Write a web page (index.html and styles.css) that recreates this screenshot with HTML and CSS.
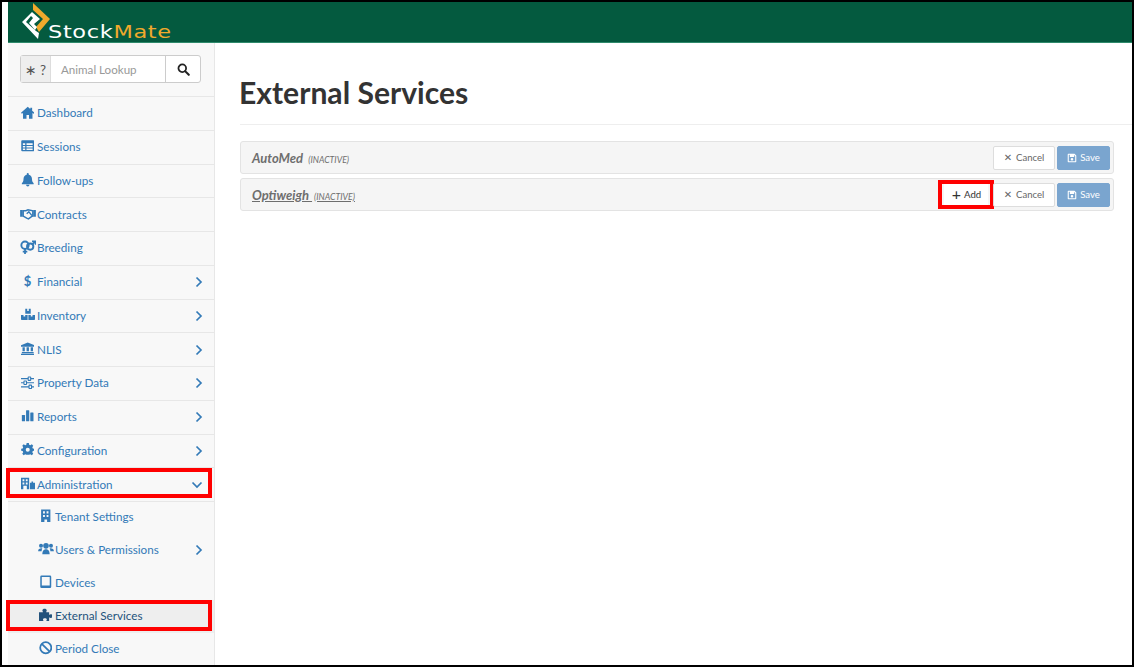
FILE: index.html
```html
<!DOCTYPE html>
<html lang="en">
<head>
<meta charset="utf-8">
<title>External Services</title>
<link rel="stylesheet" href="styles.css">
</head>
<body>
<div class="frame">
  <header class="topbar">
    <div class="logo">
      <svg class="logo-mark" viewBox="0 0 46 42" width="46" height="42">
        <path d="M18 1 L35 17 L24 30 L21 25 L28 17 L18 8 Z" fill="#f0a92c"/>
        <path d="M7 20 L17 10 L25 17 L19 22 L22 25 L20 28 L14 21 L18 16 L16 14 L11 20 L21 29 L24 31 L23 37 Z" fill="#fff"/>
      </svg>
      <span class="logo-text">Stock<span class="logo-accent">Mate</span></span>
    </div>
  </header>
  <div class="layout">
    <aside class="sidebar">
      <div class="lookup">
        <div class="lookup-addon"><span class="star">&#x2217;</span> ?</div>
        <div class="lookup-input">Animal Lookup</div>
        <div class="lookup-btn">
          <svg viewBox="0 0 16 16" width="13" height="13"><circle cx="6.5" cy="6.5" r="4.7" fill="none" stroke="#222" stroke-width="2.2"/><path d="M10 10 L14.5 14.5" stroke="#222" stroke-width="2.6" stroke-linecap="round"/></svg>
        </div>
      </div>
      <nav class="nav">
        <a class="nav-item"><span class="ico"><svg viewBox="0 0 16 16"><path d="M8 1 L0 8 L1 9.3 L2.4 8.2 V15 H6.5 V10.6 H9.5 V15 H13.6 V8.2 L15 9.3 L16 8 L13.2 5.5 V2 H11 V3.6 Z"/></svg></span>Dashboard</a>
        <a class="nav-item"><span class="ico"><svg viewBox="0 0 16 16"><path fill-rule="evenodd" d="M1.5 1.5 H14.5 A1.2 1.2 0 0 1 15.7 2.7 V13.3 A1.2 1.2 0 0 1 14.5 14.5 H1.5 A1.2 1.2 0 0 1 .3 13.3 V2.7 A1.2 1.2 0 0 1 1.5 1.5 Z M2.2 5 V7 H5 V5 Z M6.5 5 V7 H13.8 V5 Z M2.2 8.2 V10.2 H5 V8.2 Z M6.5 8.2 V10.2 H13.8 V8.2 Z M2.2 11.2 V13 H5 V11.2 Z M6.5 11.2 V13 H13.8 V11.2 Z"/></svg></span>Sessions</a>
        <a class="nav-item"><span class="ico"><svg viewBox="0 0 16 16"><path d="M8 0 A1.2 1.2 0 0 1 9.2 1.2 V2 C11.6 2.5 13 4.5 13 6.8 C13 10 14 11 15 12 V13.2 H1 V12 C2 11 3 10 3 6.8 C3 4.5 4.4 2.5 6.8 2 V1.2 A1.2 1.2 0 0 1 8 0 Z M6 14 H10 A2 2 0 0 1 6 14 Z"/></svg></span>Follow-ups</a>
        <a class="nav-item"><span class="ico"><svg viewBox="0 0 18 16" class="wide"><path d="M0 3.5 H3 V11 H0 Z M15 3.5 H18 V11 H15 Z"/><path d="M3.5 4.3 H6.5 L9 3.2 L14.5 4.3 V10.3 L13 11 L9.5 13.6 L7.5 12.8 L3.5 10.3 Z" fill="none" stroke="currentColor" stroke-width="1.7"/><path d="M7.5 7.8 L10 5.5 L13.5 9.8" fill="none" stroke="currentColor" stroke-width="1.6"/></svg></span>Contracts</a>
        <a class="nav-item"><span class="ico"><svg viewBox="0 0 18 16" class="wide"><circle cx="5.6" cy="6" r="4.2" fill="none" stroke="currentColor" stroke-width="2.2"/><circle cx="11.5" cy="7.5" r="3.6" fill="none" stroke="currentColor" stroke-width="2.2"/><path d="M5.6 10 V16 M3 13.3 H8.2 M14 5 L17 2 M13.6 1.5 H17.7 V5.5" fill="none" stroke="currentColor" stroke-width="2"/></svg></span>Breeding</a>
        <a class="nav-item"><span class="ico ico-glyph">$</span>Financial<span class="chev"><svg viewBox="0 0 10 12"><path d="M2.5 1.5 L7 6 L2.5 10.5"/></svg></span></a>
        <a class="nav-item"><span class="ico"><svg viewBox="0 0 18 16" class="mid"><path d="M5.5 .5 H8 V3.5 H10 V.5 H12.5 V7 H5.5 Z M0 8.5 H3.2 V10.5 H5.4 V8.5 H8.5 V15 H1 A1 1 0 0 1 0 14 Z M9.5 8.5 H12.6 V10.5 H14.8 V8.5 H18 V14 A1 1 0 0 1 17 15 H9.5 Z"/></svg></span>Inventory<span class="chev"><svg viewBox="0 0 10 12"><path d="M2.5 1.5 L7 6 L2.5 10.5"/></svg></span></a>
        <a class="nav-item"><span class="ico"><svg viewBox="0 0 16 16"><path d="M8 .5 L16 3.8 V5.5 H0 V3.8 Z M1.8 6.3 H4.5 V11 H1.8 Z M6.6 6.3 H9.4 V11 H6.6 Z M11.5 6.3 H14.2 V11 H11.5 Z M1 11.8 H15 V13.2 H1 Z M0 14 H16 V15.6 H0 Z"/></svg></span>NLIS<span class="chev"><svg viewBox="0 0 10 12"><path d="M2.5 1.5 L7 6 L2.5 10.5"/></svg></span></a>
        <a class="nav-item"><span class="ico"><svg viewBox="0 0 16 16"><path d="M0 3.2 H16 M0 8 H16 M0 12.8 H16" fill="none" stroke="currentColor" stroke-width="1.4"/><rect x="8.5" y="1.2" width="3" height="4" rx=".5" fill="#f8f8f8" stroke="currentColor" stroke-width="1.3"/><rect x="3.5" y="6" width="3" height="4" rx=".5" fill="#f8f8f8" stroke="currentColor" stroke-width="1.3"/><rect x="9.5" y="10.8" width="3" height="4" rx=".5" fill="#f8f8f8" stroke="currentColor" stroke-width="1.3"/></svg></span>Property Data<span class="chev"><svg viewBox="0 0 10 12"><path d="M2.5 1.5 L7 6 L2.5 10.5"/></svg></span></a>
        <a class="nav-item"><span class="ico"><svg viewBox="0 0 16 16"><rect x="1" y="7" width="3.8" height="7.5" rx=".6"/><rect x="6" y="1.5" width="3.8" height="13" rx=".6"/><rect x="11" y="4" width="3.8" height="10.5" rx=".6"/></svg></span>Reports<span class="chev"><svg viewBox="0 0 10 12"><path d="M2.5 1.5 L7 6 L2.5 10.5"/></svg></span></a>
        <a class="nav-item"><span class="ico"><svg viewBox="0 0 16 16"><path fill-rule="evenodd" d="M6.7 1 H9.3 L9.7 3 L11 3.6 L12.8 2.5 L14.5 4.3 L13.4 6 L14 7.4 L15.8 7.8 V10.2 L14 10.6 L13.4 12 L14.5 13.7 L12.8 15.4 L11 14.4 L9.7 15 H6.3 L5 14.4 L3.2 15.4 L1.5 13.7 L2.6 12 L2 10.6 L.2 10.2 V7.8 L2 7.4 L2.6 6 L1.5 4.3 L3.2 2.5 L5 3.6 L6.3 3 Z M8 6.6 A2.4 2.4 0 1 0 8 11.4 A2.4 2.4 0 1 0 8 6.6 Z" transform="translate(0 -1)"/></svg></span>Configuration<span class="chev"><svg viewBox="0 0 10 12"><path d="M2.5 1.5 L7 6 L2.5 10.5"/></svg></span></a>
        <a class="nav-item marked"><span class="ico"><svg viewBox="0 0 18 16" class="mid"><path fill-rule="evenodd" d="M0 .5 H10.5 V15.5 H0 Z M2 2.5 V5 H4.3 V2.5 Z M6.2 2.5 V5 H8.5 V2.5 Z M2 6.8 V9.3 H4.3 V6.8 Z M6.2 6.8 V9.3 H8.5 V6.8 Z M3 11 V15.5 H7.5 V11 Z"/><path d="M11.5 7 H13.5 V5.5 H15.5 V7 H18 V15.5 H11.5 Z"/></svg></span>Administration<span class="chev chev-down"><svg viewBox="0 0 12 10"><path d="M1.5 2.5 L6 7 L10.5 2.5"/></svg></span></a>
        <div class="subnav">
          <a class="sub-item"><span class="ico"><svg viewBox="0 0 16 16"><path fill-rule="evenodd" d="M2.5 .5 H13.5 V15.5 H9.6 V12.5 H6.4 V15.5 H2.5 Z M4.8 2.8 V5.2 H7 V2.8 Z M9 2.8 V5.2 H11.2 V2.8 Z M4.8 7 V9.4 H7 V7 Z M9 7 V9.4 H11.2 V7 Z"/></svg></span>Tenant Settings</a>
          <a class="sub-item"><span class="ico"><svg viewBox="0 0 18 16" class="wide"><circle cx="3.3" cy="4.4" r="2.3"/><circle cx="14.7" cy="4.4" r="2.3"/><circle cx="9" cy="4.4" r="3.2"/><path d="M0 10.5 C0 7.8 2 7 4.8 7.2 C4.2 8.5 4 9.5 4 10.5 Z M18 10.5 C18 7.8 16 7 13.2 7.2 C13.8 8.5 14 9.5 14 10.5 Z M4.8 14 C4.8 9.5 7 8.3 9 8.3 C11 8.3 13.2 9.5 13.2 14 Z"/></svg></span>Users &amp; Permissions<span class="chev"><svg viewBox="0 0 10 12"><path d="M2.5 1.5 L7 6 L2.5 10.5"/></svg></span></a>
          <a class="sub-item"><span class="ico"><svg viewBox="0 0 16 16"><path fill-rule="evenodd" d="M3 .5 H13 A1.5 1.5 0 0 1 14.5 2 V14 A1.5 1.5 0 0 1 13 15.5 H3 A1.5 1.5 0 0 1 1.5 14 V2 A1.5 1.5 0 0 1 3 .5 Z M3.3 2.3 V12.3 H12.7 V2.3 Z"/></svg></span>Devices</a>
          <a class="sub-item active marked"><span class="ico"><svg viewBox="0 0 16 16"><path d="M0 5 H4.6 C4.6 4 4 3.7 4 2.8 C4 1.6 5.2 .8 6.6 .8 C8 .8 9.2 1.6 9.2 2.8 C9.2 3.7 8.6 4 8.6 5 H12 V8 C13 8 13.4 7.4 14.2 7.4 C15.3 7.4 16 8.3 16 9.6 C16 10.9 15.3 11.8 14.2 11.8 C13.4 11.8 13 11.2 12 11.2 V15.5 H8.8 C8.8 14.5 9.3 14.2 9.3 13.4 C9.3 12.6 8.2 12.1 7 12.1 C5.8 12.1 4.7 12.6 4.7 13.4 C4.7 14.2 5.2 14.5 5.2 15.5 H0 Z"/></svg></span>External Services</a>
          <a class="sub-item"><span class="ico"><svg viewBox="0 0 16 16"><circle cx="8" cy="8" r="6.6" fill="none" stroke="currentColor" stroke-width="2.1"/><path d="M3.3 3.3 L12.7 12.7" stroke="currentColor" stroke-width="2.1"/></svg></span>Period Close</a>
        </div>
      </nav>
    </aside>
    <main class="content">
      <h1 class="page-title">External Services</h1>
      <section class="service">
        <div class="service-name"><span class="name">AutoMed</span> <small class="status">(INACTIVE)</small></div>
        <div class="actions">
          <button class="btn"><span class="btn-ico">&#x2715;</span>Cancel</button>
          <button class="btn btn-save"><svg class="save-ico" viewBox="0 0 14 14"><path fill-rule="evenodd" d="M2 1 H10.5 L13 3.5 V12 A1 1 0 0 1 12 13 H2 A1 1 0 0 1 1 12 V2 A1 1 0 0 1 2 1 Z M2.5 2.5 V11.5 H11.5 V4.2 L10 2.7 V5.5 H4 V2.5 Z M7 7 A1.8 1.8 0 1 0 7 10.6 A1.8 1.8 0 1 0 7 7 Z"/></svg>Save</button>
        </div>
      </section>
      <section class="service">
        <div class="service-name linked"><span class="name">Optiweigh</span> <small class="status">(INACTIVE)</small></div>
        <div class="actions">
          <button class="btn btn-add marked"><span class="plus">+</span>Add</button>
          <button class="btn"><span class="btn-ico">&#x2715;</span>Cancel</button>
          <button class="btn btn-save"><svg class="save-ico" viewBox="0 0 14 14"><path fill-rule="evenodd" d="M2 1 H10.5 L13 3.5 V12 A1 1 0 0 1 12 13 H2 A1 1 0 0 1 1 12 V2 A1 1 0 0 1 2 1 Z M2.5 2.5 V11.5 H11.5 V4.2 L10 2.7 V5.5 H4 V2.5 Z M7 7 A1.8 1.8 0 1 0 7 10.6 A1.8 1.8 0 1 0 7 7 Z"/></svg>Save</button>
        </div>
      </section>
    </main>
  </div>
</div>
</body>
</html>
```
FILE: styles.css
```css
* { box-sizing: border-box; }
html, body { margin: 0; padding: 0; height: 100%; background: #fff; }
body { font-family: Lato, "Open Sans", sans-serif; color: #333; overflow: hidden; }

.frame {
  width: 1134px;
  height: 667px;
  border: 2px solid #000;
  padding-left: 6px;
  display: flex;
  flex-direction: column;
  overflow: hidden;
}

.topbar {
  flex: none;
  height: 41px;
  background: #045a3f;
  border-bottom: 1px solid #2f8a6c;
}
.logo { position: relative; height: 40px; padding: 20px 0 0 40px; }
.logo-mark { position: absolute; left: 7px; top: 0; }
.logo-text {
  display: block;
  width: 100px;
  font-family: "DejaVu Sans", sans-serif;
  font-size: 18px;
  line-height: 20px;
  letter-spacing: .5px;
  color: #fff;
  white-space: nowrap;
  transform: scaleX(1.25);
  transform-origin: left center;
}
.logo-accent { color: #f0a92c; }

.layout { flex: 1; display: flex; min-height: 0; }

.sidebar {
  flex: none;
  width: 207px;
  background: #f8f8f8;
  border-right: 1px solid #e7e7e7;
}

.lookup {
  display: flex;
  height: 28px;
  margin: 12px 13px 13px 12px;
  border: 1px solid #ccc;
  border-radius: 3px;
  background: #fff;
  font-size: 11.6px;
}
.lookup-addon {
  width: 30px;
  background: #eee;
  border-right: 1px solid #ddd;
  color: #555;
  text-align: center;
  line-height: 28px;
  font-size: 13.5px;
}
.star { font-family: "DejaVu Sans", sans-serif; font-size: 14px; }
.lookup-input {
  flex: 1;
  padding-left: 10px;
  color: #999;
  line-height: 28px;
}
.lookup-btn {
  width: 35px;
  border-left: 1px solid #ccc;
  display: flex;
  align-items: center;
  justify-content: center;
}

.nav { display: block; border-top: 1px solid #e7e7e7; }

.nav-item, .sub-item {
  position: relative;
  display: flex;
  align-items: center;
  color: #337ab7;
  font-size: 11.7px;
  white-space: nowrap;
}
.nav-item {
  height: 33.75px;
  padding: 0 0 2px 12px;
  border-bottom: 1px solid #e7e7e7;
}
.sub-item { height: 33px; padding: 0 0 3px 30px; }
.subnav { margin-top: -1px; }
.sub-item.active { background: #eee; color: #23527c; }

.ico {
  flex: none;
  width: 17px;
  display: flex;
  justify-content: center;
  padding-right: 2px;
  color: inherit;
}
.ico svg { width: 13.5px; height: 13.5px; fill: currentColor; flex: none; }
.ico svg.wide { width: 16px; height: 14px; }
.ico svg.mid { width: 14px; height: 13px; }
.ico-glyph { font-weight: 700; font-size: 13px; line-height: 13px; }

.chev { margin: 2px 10px 0 auto; width: 10px; height: 12px; display: flex; }
.chev svg { width: 10px; height: 12px; fill: none; stroke: #337ab7; stroke-width: 1.7; }
.chev-down { margin-right: 11px; width: 12px; }
.chev-down svg { width: 12px; height: 10px; margin-top: 1px; }

.marked::after {
  content: "";
  box-sizing: border-box;
  position: absolute;
  pointer-events: none;
  border: 4px solid #f00;
}
.nav-item.marked::after { left: -2px; right: 2px; top: 0; height: 30px; }
.sub-item.marked::after { left: -2px; right: 2px; top: 0; height: 31px; }
.btn-add.marked::after { left: -6px; right: -6px; top: -3px; bottom: -2px; }

.content { flex: 1; min-width: 0; padding-left: 25px; }

.page-title {
  margin: 0 0 16px;
  height: 82px;
  padding-top: 30px;
  font-family: Lato, sans-serif;
  font-size: 30.1px;
  font-weight: 700;
  line-height: 38px;
  color: #333;
  text-indent: -1px;
  border-bottom: 1px solid #eee;
}

.service {
  display: flex;
  align-items: center;
  justify-content: space-between;
  width: 874px;
  height: 33px;
  margin-bottom: 4px;
  padding: 0 3px 0 11px;
  background: #f5f5f5;
  border: 1px solid #e3e3e3;
  border-radius: 3px;
}
.service-name { font-size: 13px; font-style: italic; color: #6e6e6e; }
.name { font-weight: 700; }
.status { font-size: 8.7px; font-weight: 400; margin-left: 2px; }
.linked { text-decoration: underline; }

.actions { display: flex; align-items: center; gap: 2px; }

.btn {
  position: relative;
  display: flex;
  align-items: center;
  justify-content: center;
  height: 24px;
  width: 62px;
  padding: 0;
  border: 1px solid #ddd;
  border-radius: 2px;
  background: #fff;
  color: #666;
  font-family: Lato, sans-serif;
  font-size: 9.6px;
}
.btn-ico { font-size: 10px; margin-right: 4px; font-family: "DejaVu Sans", sans-serif; }
.btn-add { width: 44px; border: 0; color: #333; margin-right: 3px; padding: 0 0 0 1px; }
.plus { font-size: 16px; line-height: 12px; margin: -2px 3px 0 0; font-weight: 400; }
.btn-save { width: 53px; background: #7aa5cf; border-color: #7aa5cf; color: #fff; }
.save-ico { width: 10px; height: 10px; fill: #fff; margin-right: 3px; }
```
